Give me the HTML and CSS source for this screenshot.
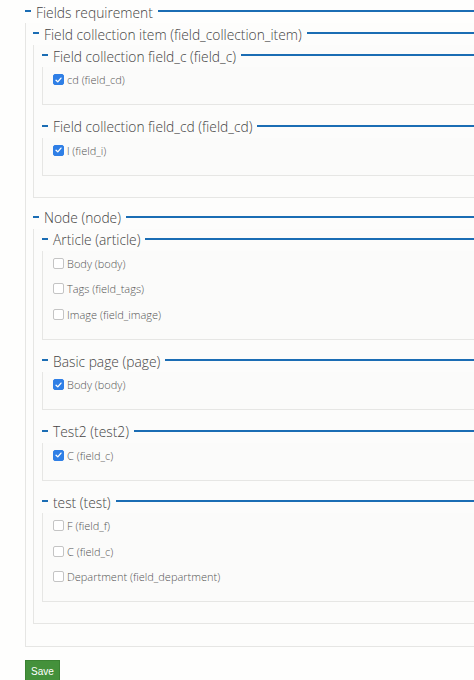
FILE: index.html
```html
<!DOCTYPE html>
<html>
<head>
<meta charset="utf-8">
<link rel="stylesheet" href="styles.css">
</head>
<body>
<form class="form">
  <div class="fs lvl1">
    <div class="lg"><span>Fields requirement</span></div>
    <div class="fs-body">
      <div class="fs lvl2">
        <div class="lg"><span>Field collection item (field_collection_item)</span></div>
        <div class="fs-body">
          <div class="fs lvl3">
            <div class="lg"><span>Field collection field_c (field_c)</span></div>
            <div class="fs-body">
              <label class="row"><span class="cb checked"><svg viewBox="0 0 10 10"><path d="M2.3 5.2 L4.2 7.1 L7.8 2.9" /></svg></span>cd (field_cd)</label>
            </div>
          </div>
          <div class="fs lvl3">
            <div class="lg"><span>Field collection field_cd (field_cd)</span></div>
            <div class="fs-body">
              <label class="row"><span class="cb checked"><svg viewBox="0 0 10 10"><path d="M2.3 5.2 L4.2 7.1 L7.8 2.9" /></svg></span>l (field_i)</label>
            </div>
          </div>
        </div>
      </div>
      <div class="fs lvl2">
        <div class="lg"><span>Node (node)</span></div>
        <div class="fs-body">
          <div class="fs lvl3">
            <div class="lg"><span>Article (article)</span></div>
            <div class="fs-body">
              <label class="row"><span class="cb"></span>Body (body)</label>
              <label class="row"><span class="cb"></span>Tags (field_tags)</label>
              <label class="row"><span class="cb"></span>Image (field_image)</label>
            </div>
          </div>
          <div class="fs lvl3">
            <div class="lg"><span>Basic page (page)</span></div>
            <div class="fs-body">
              <label class="row"><span class="cb checked"><svg viewBox="0 0 10 10"><path d="M2.3 5.2 L4.2 7.1 L7.8 2.9" /></svg></span>Body (body)</label>
            </div>
          </div>
          <div class="fs lvl3">
            <div class="lg"><span>Test2 (test2)</span></div>
            <div class="fs-body">
              <label class="row"><span class="cb checked"><svg viewBox="0 0 10 10"><path d="M2.3 5.2 L4.2 7.1 L7.8 2.9" /></svg></span>C (field_c)</label>
            </div>
          </div>
          <div class="fs lvl3">
            <div class="lg"><span>test (test)</span></div>
            <div class="fs-body">
              <label class="row"><span class="cb"></span>F (field_f)</label>
              <label class="row"><span class="cb"></span>C (field_c)</label>
              <label class="row"><span class="cb"></span>Department (field_department)</label>
            </div>
          </div>
        </div>
      </div>
    </div>
  </div>
  <button type="button" class="save">Save</button>
</form>
</body>
</html>
```
FILE: styles.css
```css
html {
  overflow-x: hidden;
  background: #fefefd;
}
body {
  margin: 0;
  padding: 1px 0 0 25px;
  font-family: "Open Sans", "Noto Sans", sans-serif;
  color: #555;
  background: #fefefd;
}
.form {
  width: 640px;
}
.lg {
  display: flex;
  align-items: center;
  height: 22px;
  font-size: 13.8px;
  font-weight: 300;
  color: #444;
  white-space: nowrap;
}
.lg::before {
  content: "";
  width: 6px;
  height: 2px;
  background: #1b6db4;
  margin-right: 5px;
  transform: translateY(-1px);
}
.lg::after {
  content: "";
  flex: 1;
  height: 2px;
  background: #1b6db4;
  margin-left: 5px;
  transform: translateY(-1px);
}
.fs-body {
  border: 1px solid #e6e6e4;
  border-top: none;
  background: rgba(0, 0, 0, 0.005);
}
.lvl1 > .fs-body {
  padding: 0 0 22px 7px;
}
.lvl2 > .fs-body {
  padding: 0 0 21px 8px;
}
.lvl2 + .lvl2 {
  margin-top: 9px;
}
.lvl3 > .fs-body {
  padding: 0 0 11.5px 10px;
}
.lvl3 + .lvl3 {
  margin-top: 10.5px;
}
.row {
  display: flex;
  align-items: center;
  height: 25.5px;
  font-size: 11px;
  font-weight: 300;
  color: #555;
}
.cb {
  width: 9px;
  height: 9px;
  border: 1px solid #c4c4c4;
  border-radius: 2px;
  background: #fff;
  margin-right: 3px;
  display: flex;
  align-items: center;
  justify-content: center;
}
.cb.checked {
  background: #2f7fe6;
  border-color: #2f7fe6;
}
.cb svg {
  width: 10px;
  height: 10px;
  fill: none;
  stroke: #fff;
  stroke-width: 1.5;
  stroke-linecap: round;
  stroke-linejoin: round;
}
.save {
  margin-top: 13px;
  display: block;
  background: #44913b;
  color: #fff;
  border: 1px solid #3a8232;
  font-family: "Liberation Sans", Arial, sans-serif;
  font-size: 10px;
  padding: 5px 5px 7px;
  border-radius: 0;
}
```
